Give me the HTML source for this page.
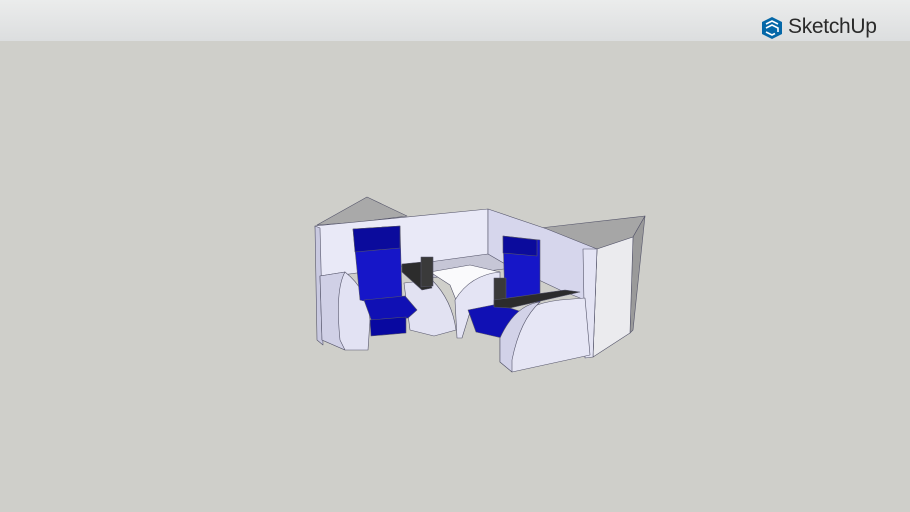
<!DOCTYPE html>
<html><head><style>
body{margin:0;width:910px;height:512px;overflow:hidden;background:#cfcfca;font-family:"Liberation Sans",sans-serif}
.hdr{position:absolute;left:0;top:0;width:910px;height:41px;background:linear-gradient(#ebecec,#dcdedf)}
.logo{position:absolute;left:761px;top:16px}
.txt{position:absolute;left:788px;top:15px;font-size:21px;color:#2a2a2a;letter-spacing:-0.3px}
svg.m{position:absolute;left:0;top:0}
</style></head><body>
<div class="hdr"></div>
<svg class="logo" width="22" height="24" viewBox="0 0 22 24">
<path d="M11 1 L21 6 L21 18 L11 23 L1 18 L1 6 Z" fill="#0568a8"/>
<path d="M5 8 L11 5 L17 8 M5 12 L11 9 L17 12 L17 16 M5 16 L11 19 L14 17.5" stroke="#fff" stroke-width="1.6" fill="none"/>
</svg>
<div class="txt">SketchUp</div>
<svg class="m" width="910" height="512" stroke="#55556a" stroke-width="0.6" stroke-linejoin="round">
<polygon points="317,225 367,197 407,216 360,222" fill="#a9a9a9"/>
<polygon points="540,228 645,216 633,237 597,249" fill="#a6a6a6"/>
<polygon points="633,237 645,216 633,330 630,333" fill="#9a9a9a"/>
<polygon points="597,249 633,237 630,333 593,357" fill="#ebebee"/>
<polygon points="315,226 488,209 488,255 320,278" fill="#e9e9f7"/>
<polygon points="315,226 320,228 323,345 317,340" fill="#c9c9e0"/>
<polygon points="488,209 547,229 597,249 593,357 585,300 560,290 488,256" fill="#d6d6ec"/>
<polygon points="583,249 597,249 593,357 585,358" fill="#e4e4f4"/>
<polygon points="400,266 488,254 512,268 430,278" fill="#c6c6d6"/>
<polygon points="430,272 470,265 500,272 470,285 458,305 450,285" fill="#fafafc"/>
<path d="M320,276 L345,272 Q368,290 370,320 L368,350 L345,350 L322,340 Z" fill="#e2e2f3"/>
<path d="M320,276 L345,272 Q335,290 340,340 L345,350 L322,340 Z" fill="#d0d0e6"/>
<path d="M404,283 L432,280 Q452,300 456,330 L434,336 L410,330 Z" fill="#e2e2f2"/>
<path d="M455,300 Q470,275 500,272 L500,305 L470,312 L462,338 L457,338 Z" fill="#e4e4f4"/>
<polygon points="353,229 400,226 402,300 372,303 360,300" fill="#1616c8"/>
<polygon points="353,229 400,226 400,248 355,252" fill="#0b0b9c"/>
<polygon points="364,300 405,296 417,310 408,318 372,322" fill="#1010b4"/>
<polygon points="370,320 406,317 406,333 371,336" fill="#0808a0"/>
<polygon points="503,236 540,240 540,302 505,303" fill="#1616c8"/>
<polygon points="503,236 537,240 537,256 503,253" fill="#0b0b9c"/>
<polygon points="468,310 498,304 522,312 502,338 476,332" fill="#1010b4"/>
<path d="M500,338 Q515,305 560,300 L585,298 L590,355 L512,372 L500,362 Z" fill="#e6e6f5"/>
<path d="M500,338 Q515,305 540,302 Q520,320 512,360 L512,372 L500,362 Z" fill="#d2d2e8"/>
<polygon points="402,264 422,262 432,288 422,290 402,272" fill="#2c2c2c"/>
<polygon points="421,257 433,257 433,286 421,287" fill="#3a3a3a"/>
<polygon points="494,278 506,278 506,305 494,305" fill="#3a3a3a"/>
<polygon points="494,300 565,290 580,292 510,308 494,307" fill="#2c2c2c"/>
</svg>
</body></html>
